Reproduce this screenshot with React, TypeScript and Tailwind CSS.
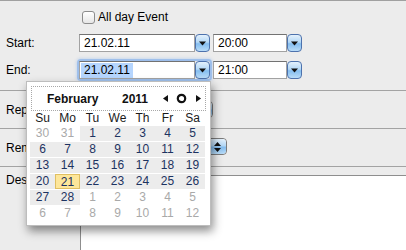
import React from "react";

const aqua =
  "bg-[linear-gradient(to_bottom,#e4f1fc_0%,#b4d8f6_45%,#84bdef_55%,#b9dcf8_100%)] border border-[#4d72ad]";

const DownArrow = () => (
  <svg width="7" height="5" viewBox="0 0 7 5">
    <path d="M0 0.5 H7 L3.5 4.5 Z" fill="#111" />
  </svg>
);

const ComboButton = () => (
  <div className={`w-[15px] h-[18px] rounded-[4px] flex items-center justify-center ${aqua}`}>
    <DownArrow />
  </div>
);

const Field = ({ w, value, focused }: { w: string; value: string; focused?: boolean }) => (
  <div
    className={`${w} h-[18px] bg-white border border-[#a2a2a2] border-t-[#727272] flex items-center ${
      focused ? "pl-[1px]" : "pl-[4px]"
    }`}
  >
    {focused ? (
      <span className="bg-[#b5d5fe] px-[3px] leading-[15px] text-black">{value}</span>
    ) : (
      <span className="leading-[15px] text-black">{value}</span>
    )}
  </div>
);

type Day = { n: number; cur: boolean };

const weeks: Day[][] = [
  [30, 31, 1, 2, 3, 4, 5].map((n, i) => ({ n, cur: i > 1 })),
  [6, 7, 8, 9, 10, 11, 12].map((n) => ({ n, cur: true })),
  [13, 14, 15, 16, 17, 18, 19].map((n) => ({ n, cur: true })),
  [20, 21, 22, 23, 24, 25, 26].map((n) => ({ n, cur: true })),
  [27, 28, 1, 2, 3, 4, 5].map((n, i) => ({ n, cur: i < 2 })),
  [6, 7, 8, 9, 10, 11, 12].map((n) => ({ n, cur: false })),
];

const dayNames = ["Su", "Mo", "Tu", "We", "Th", "Fr", "Sa"];

const Calendar = () => (
  <div className="absolute left-[26px] top-[80px] w-[185px] h-[145px] bg-white border border-[#bdbdbd] shadow-[2px_5px_9px_rgba(0,0,0,0.45)]">
    {/* header */}
    <div className="ml-[4px] mt-[4px] w-[175px] h-[25px] border border-dotted border-[#a8a8a8] flex items-center pl-[15px] font-bold text-[#111]">
      <span className="w-[75px]">February</span>
      <span className="w-[40px]">2011</span>
      <div className="flex items-center">
        <svg width="5" height="7" viewBox="0 0 5 7" className="ml-[1px]">
          <path d="M5 0 V7 L0 3.5 Z" fill="#111" />
        </svg>
        <svg width="11" height="11" viewBox="0 0 11 11" className="ml-[8px]">
          <circle cx="5.5" cy="5.5" r="3.7" fill="none" stroke="#111" strokeWidth="2.2" />
        </svg>
        <svg width="5" height="7" viewBox="0 0 5 7" className="ml-[9px]">
          <path d="M0 0 V7 L5 3.5 Z" fill="#111" />
        </svg>
      </div>
    </div>
    {/* day names */}
    <div className="ml-[3px] flex h-[15px] items-center">
      {dayNames.map((d) => (
        <div key={d} className="w-[25px] text-center text-[#1a1a1a] leading-[15px]">
          {d}
        </div>
      ))}
    </div>
    {/* weeks */}
    <div className="ml-[3px] flex flex-col gap-[1px]">
      {weeks.map((w, wi) => (
        <div key={wi} className="flex h-[15px]">
          {w.map((d, di) => {
            const today = d.cur && d.n === 21;
            return (
              <div
                key={di}
                className={`w-[25px] h-[15px] text-center leading-[15px] ${
                  today
                    ? "bg-[#fde69a] border border-[#e0bf62] leading-[13px]"
                    : d.cur
                    ? "bg-[#ececec]"
                    : ""
                } ${d.cur ? "text-[#1d3361]" : "text-[#a9a9a9]"}`}
              >
                {d.n}
              </div>
            );
          })}
        </div>
      ))}
    </div>
  </div>
);

const PopupButton = ({ w, stepper }: { w: string; stepper?: boolean }) => (
  <div className={`${w} h-[17px] rounded-[4px] flex overflow-hidden border border-[#7b7b7b] bg-[linear-gradient(to_bottom,#ffffff,#e9e9e9)]`}>
    <div className="flex-1" />
    <div className={`w-[18px] h-full flex flex-col items-center justify-center gap-[2px] ${aqua} border-y-0 border-r-0 rounded-r-[3px]`}>
      {stepper ? (
        <>
          <svg width="7" height="4" viewBox="0 0 7 4">
            <path d="M0 4 H7 L3.5 0 Z" fill="#111" />
          </svg>
          <svg width="7" height="4" viewBox="0 0 7 4">
            <path d="M0 0 H7 L3.5 4 Z" fill="#111" />
          </svg>
        </>
      ) : (
        <DownArrow />
      )}
    </div>
  </div>
);

// labels that sit under the calendar popup are clipped at its edge
const HiddenLabel = ({ text }: { text: string }) => (
  <div className="w-[80px] pl-[6px]">
    <div className="w-[20px] overflow-hidden whitespace-nowrap">{text}</div>
  </div>
);

export default function App() {
  return (
    <div
      className="relative w-[406px] h-[250px] overflow-hidden bg-[#ececec] border-t border-[#a0a0a0] text-[12px] text-black"
      style={{ fontFamily: '"Liberation Sans", Arial, sans-serif' }}
    >
      <div className="flex flex-col">
        {/* all day */}
        <div className="h-[33px] pt-[10px] pl-[82px] flex items-start gap-[3px]">
          <div className="w-[13px] h-[13px] rounded-[3px] border border-[#8c8c8c] bg-[linear-gradient(to_bottom,#ffffff,#e6e6e6)]" />
          <span className="leading-[13px]">All day Event</span>
        </div>

        {/* start */}
        <div className="h-[18px] flex items-center">
          <div className="w-[79px] pl-[6px]">Start:</div>
          <Field w="w-[116px]" value="21.02.11" />
          <ComboButton />
          <div className="w-[3px]" />
          <Field w="w-[74px]" value="20:00" />
          <ComboButton />
        </div>

        {/* end */}
        <div className="mt-[9px] h-[18px] flex items-center">
          <div className="w-[79px] pl-[6px]">End:</div>
          <div className="flex rounded-[2px] shadow-[0_0_0_2px_rgba(120,170,235,0.55),0_0_3px_3px_rgba(120,170,235,0.3)]">
            <Field w="w-[116px]" value="21.02.11" focused />
            <ComboButton />
          </div>
          <div className="w-[3px]" />
          <Field w="w-[74px]" value="21:00" />
          <ComboButton />
        </div>

        {/* repeat */}
        <div className="mt-[11px] border-t border-[#a3a3a3] h-[38px] flex items-center">
          <HiddenLabel text="Repeat:" />
          <PopupButton w="w-[133px]" />
        </div>

        {/* reminder */}
        <div className="border-t border-[#a3a3a3] h-[38px] flex items-center">
          <HiddenLabel text="Reminder:" />
          <div className="mt-[-2px]">
            <PopupButton w="w-[147px]" stepper />
          </div>
        </div>

        {/* description */}
        <div className="border-t border-[#a3a3a3] h-[90px] flex">
          <div className="pt-[6px] leading-[15px]">
            <HiddenLabel text="Description:" />
          </div>
          <div className="flex-1 mt-[8px] bg-white border-t border-l border-[#8e8e8e]" />
        </div>
      </div>

      <Calendar />
    </div>
  );
}
